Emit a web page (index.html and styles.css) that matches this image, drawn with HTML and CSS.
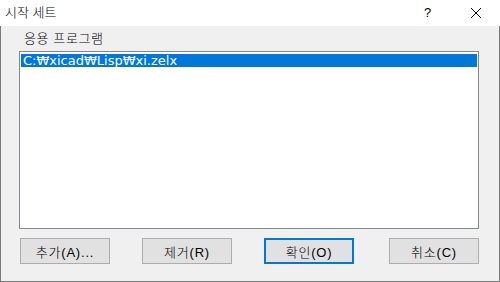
FILE: index.html
```html
<!DOCTYPE html>
<html>
	<head>
		<meta charset="UTF-8">
		<title>시작 세트</title>
		<link rel="stylesheet" href="styles.css">
	</head>
	<body>
		<div class="window">
			<div class="titlebar">
				<span class="title">시작 세트</span>
				<span class="help">?</span>
				<span class="close">
					<svg width="12" height="12" viewBox="0 0 12 12">
						<path d="M1 1 L11 11 M11 1 L1 11" stroke="#000" stroke-width="1" fill="none" />
					</svg>
				</span>
			</div>
			<div class="content">
				<div class="label">응용 프로그램</div>
				<ul class="listbox">
					<li class="selected">C:₩xicad₩Lisp₩xi.zelx</li>
				</ul>
				<div class="buttons">
					<button class="btn">추가(A)...</button>
					<button class="btn">제거(R)</button>
					<button class="btn default">확인(O)</button>
					<button class="btn last">취소(C)</button>
				</div>
			</div>
		</div>
	</body>
</html>
```

FILE: styles.css
```css
* {
	margin: 0;
	padding: 0;
	box-sizing: border-box;
}

body {
	font-family: "Liberation Sans", "Noto Sans CJK KR", sans-serif;
	font-size: 13px;
	font-weight: 300;
	color: #000;
	background: #fff;
}

.window {
	width: 500px;
	height: 282px;
	display: flex;
	flex-direction: column;
}

.titlebar {
	height: 26px;
	background: #fff;
	display: flex;
	align-items: center;
	padding-left: 5px;
}

.title {
	flex: 1;
	line-height: 15px;
	padding-bottom: 2px;
}

.help {
	width: 12px;
	font-size: 13px;
	font-weight: normal;
	line-height: 15px;
	margin-right: 34px;
	padding-bottom: 1px;
}

.close {
	display: flex;
	width: 12px;
	height: 12px;
	margin-right: 18px;
}

.content {
	flex: 1;
	background: #f0f0f0;
	border: 1px solid #7a7a7a;
	border-top: none;
	padding: 5px 20px 0 18px;
	display: flex;
	flex-direction: column;
}

.label {
	line-height: 15px;
	padding-left: 5px;
	margin-bottom: 5px;
	letter-spacing: 0.6px;
}

.listbox {
	list-style: none;
	width: 460px;
	height: 178px;
	background: #fff;
	border: 1px solid #828790;
	padding: 2px 1px;
}

.listbox li {
	height: 13px;
	line-height: 13px;
	padding-left: 2px;
	font-family: "DejaVu Sans", "Noto Sans CJK KR", sans-serif;
	font-size: 13px;
	font-weight: normal;
}

.listbox li.selected {
	background: #0078d7;
	color: #fff;
}

.buttons {
	display: flex;
	gap: 32px;
	margin-top: 9px;
	width: 460px;
}

.btn {
	width: 90px;
	height: 26px;
	background: #e1e1e1;
	border: 1px solid #adadad;
	font-family: "Liberation Sans", "Noto Sans CJK KR", sans-serif;
	font-size: 13px;
	font-weight: 300;
	letter-spacing: 0.8px;
	color: #000;
}

.btn:first-child {
	margin-left: 1px;
}

.btn.default {
	border: 2px solid #0078d7;
}

.btn.last {
	margin-left: auto;
}
```
